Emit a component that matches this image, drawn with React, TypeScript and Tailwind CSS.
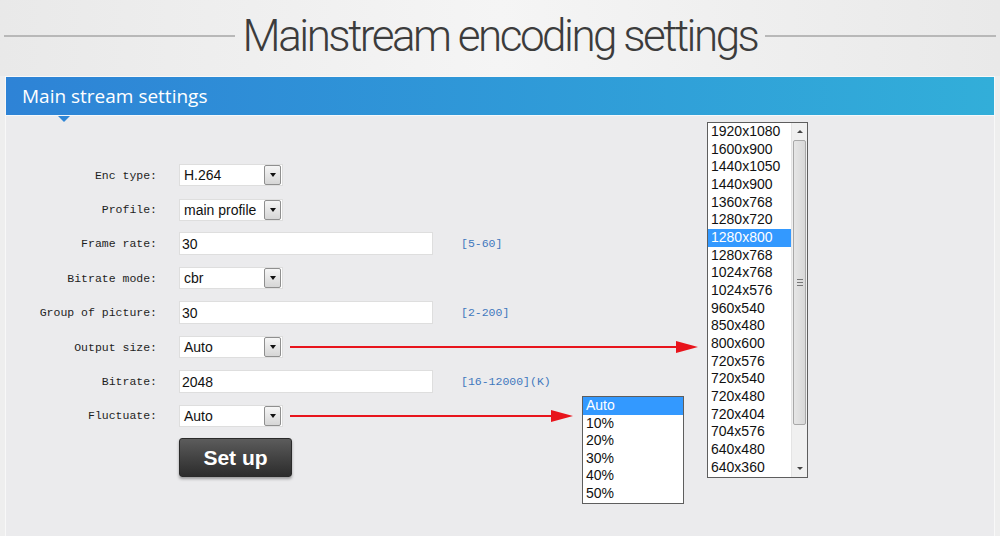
import React from 'react';

const labelFont = { fontFamily: '"Liberation Mono", "DejaVu Sans Mono", monospace' };
const uiFont = { fontFamily: '"Liberation Sans", Arial, sans-serif' };

const resolutions = [
  '1920x1080', '1600x900', '1440x1050', '1440x900', '1360x768', '1280x720',
  '1280x800', '1280x768', '1024x768', '1024x576', '960x540', '850x480',
  '800x600', '720x576', '720x540', '720x480', '720x404', '704x576',
  '640x480', '640x360',
];

const fluctuations = ['Auto', '10%', '20%', '30%', '40%', '50%'];

type Row =
  | { label: string; kind: 'select'; value: string }
  | { label: string; kind: 'input'; value: string; hint: string };

const rows: Row[] = [
  { label: 'Enc type:', kind: 'select', value: 'H.264' },
  { label: 'Profile:', kind: 'select', value: 'main profile' },
  { label: 'Frame rate:', kind: 'input', value: '30', hint: '[5-60]' },
  { label: 'Bitrate mode:', kind: 'select', value: 'cbr' },
  { label: 'Group of picture:', kind: 'input', value: '30', hint: '[2-200]' },
  { label: 'Output size:', kind: 'select', value: 'Auto' },
  { label: 'Bitrate:', kind: 'input', value: '2048', hint: '[16-12000](K)' },
  { label: 'Fluctuate:', kind: 'select', value: 'Auto' },
];

function SelectBox({ value }: { value: string }) {
  return (
    <div className="flex items-center w-[104px] h-[22px] bg-white border border-[#dedede]" style={uiFont}>
      <span className="flex-1 pl-[4px] text-[14px] text-[#111] leading-none">{value}</span>
      <div className="mr-[1px] w-[17px] h-[20px] flex items-center justify-center rounded-[2px] border border-[#8f8f8f] bg-gradient-to-b from-[#f6f6f6] to-[#d6d6d6]">
        <div className="w-0 h-0 border-l-[3.5px] border-r-[3.5px] border-t-[4px] border-l-transparent border-r-transparent border-t-[#111]" />
      </div>
    </div>
  );
}

function TextBox({ value }: { value: string }) {
  return (
    <div className="flex items-center w-[254px] h-[23px] bg-white border border-[#dedede]" style={uiFont}>
      <span className="pl-[2px] text-[14px] text-[#111] leading-none">{value}</span>
    </div>
  );
}

function Arrow({ x1, x2, y }: { x1: number; x2: number; y: number }) {
  const w = x2 - x1;
  return (
    <svg className="absolute pointer-events-none" style={{ left: x1, top: y - 8 }} width={w} height={16}>
      <line x1={0} y1={8} x2={w - 20} y2={8} stroke="#e8141c" strokeWidth={2} />
      <polygon points={`${w - 22},2 ${w},8 ${w - 22},14`} fill="#e8141c" />
    </svg>
  );
}

function ResolutionList() {
  return (
    <div className="absolute left-[707px] top-[122px] w-[101px] h-[356px] flex bg-white border border-[#5e5e5e]" style={uiFont}>
      <div className="flex-1 flex flex-col">
        {resolutions.map((r) => (
          <div
            key={r}
            className={`h-[17.68px] pl-[3px] text-[14px] leading-[17.68px] ${r === '1280x800' ? 'bg-[#3399ff] text-white' : 'text-[#111]'}`}
          >
            {r}
          </div>
        ))}
      </div>
      <div className="w-[16px] flex flex-col bg-[#f0f0f0] border-l border-[#e4e4e4]">
        <div className="h-[17px] flex items-center justify-center">
          <div className="w-0 h-0 border-l-[3px] border-r-[3px] border-b-[3px] border-l-transparent border-r-transparent border-b-[#444]" />
        </div>
        <div className="h-[285px] mx-[1px] rounded-[2px] border border-[#a8a8a8] bg-gradient-to-r from-[#e6e6e6] to-[#d8d8d8] flex flex-col items-center justify-center gap-[2px]">
          <div className="w-[6px] h-px bg-[#777]" />
          <div className="w-[6px] h-px bg-[#777]" />
          <div className="w-[6px] h-px bg-[#777]" />
        </div>
        <div className="flex-1" />
        <div className="h-[17px] flex items-center justify-center">
          <div className="w-0 h-0 border-l-[3px] border-r-[3px] border-t-[3px] border-l-transparent border-r-transparent border-t-[#444]" />
        </div>
      </div>
    </div>
  );
}

function FluctuateList() {
  return (
    <div className="absolute left-[582px] top-[396px] w-[102px] h-[108px] flex flex-col bg-white border border-[#5e5e5e]" style={uiFont}>
      {fluctuations.map((f) => (
        <div
          key={f}
          className={`h-[17.6px] pl-[3px] text-[14px] leading-[17.6px] ${f === 'Auto' ? 'bg-[#3399ff] text-white' : 'text-[#111]'}`}
        >
          {f}
        </div>
      ))}
    </div>
  );
}

export default function App() {
  return (
    <div className="relative w-[1000px] h-[536px] overflow-hidden bg-[#eeeeee] flex flex-col">
      {/* page heading with rules on both sides */}
      <div className="h-[76px] flex items-center px-[4px] pb-[4px] bg-gradient-to-r from-[#e9e9e9] via-[#f5f5f5] to-[#e9e9e9]">
        <div className="flex-1 h-[2px] bg-[#b8b8b8]" />
        <h1
          className="px-[8px] text-[44px] font-light tracking-[-2.5px] text-[#3c3c3c] leading-none"
          style={{ fontFamily: 'Roboto, "Liberation Sans", sans-serif' }}
        >
          Mainstream encoding settings
        </h1>
        <div className="flex-1 h-[2px] bg-[#b8b8b8]" />
      </div>

      <div className="flex-1 mx-[5px] flex flex-col border-t border-x border-[#f8f8f8] bg-[#ebebed]">
        <div className="relative h-[39px] flex items-center pl-[16px] bg-gradient-to-r from-[#2e83d6] to-[#32aed9] border-b border-[#f4f8fb]">
          <span className="text-[19px] text-white" style={{ fontFamily: '"Open Sans", "Noto Sans", sans-serif' }}>
            Main stream settings
          </span>
          <div className="absolute left-[52px] top-[39px] w-0 h-0 border-l-[6px] border-r-[6px] border-t-[6px] border-l-transparent border-r-transparent border-t-[#2f86d6]" />
        </div>

        <div className="flex flex-col pt-[42px]">
          {rows.map((row) => (
            <div key={row.label} className="h-[34.4px] flex items-center">
              <span className="w-[151px] text-right text-[11.5px] text-[#1e1e1e]" style={labelFont}>
                {row.label}
              </span>
              <div className="ml-[22px] flex items-center">
                {row.kind === 'select' ? <SelectBox value={row.value} /> : <TextBox value={row.value} />}
                {row.kind === 'input' && (
                  <span className="ml-[28px] text-[11.5px] text-[#3f78bd]" style={labelFont}>
                    {row.hint}
                  </span>
                )}
              </div>
            </div>
          ))}
          <div className="ml-[173px] mt-[5px]">
            <button
              type="button"
              className="w-[113px] h-[39px] rounded-[3px] border border-[#2a2a2a] bg-gradient-to-b from-[#5c5c5c] to-[#2c2c2c] text-white text-[21px] font-bold shadow-[0_2px_3px_rgba(0,0,0,0.35)]"
              style={uiFont}
            >
              Set up
            </button>
          </div>
        </div>
      </div>

      <Arrow x1={290} x2={698} y={347} />
      <Arrow x1={290} x2={573} y={416} />
      <ResolutionList />
      <FluctuateList />
    </div>
  );
}
